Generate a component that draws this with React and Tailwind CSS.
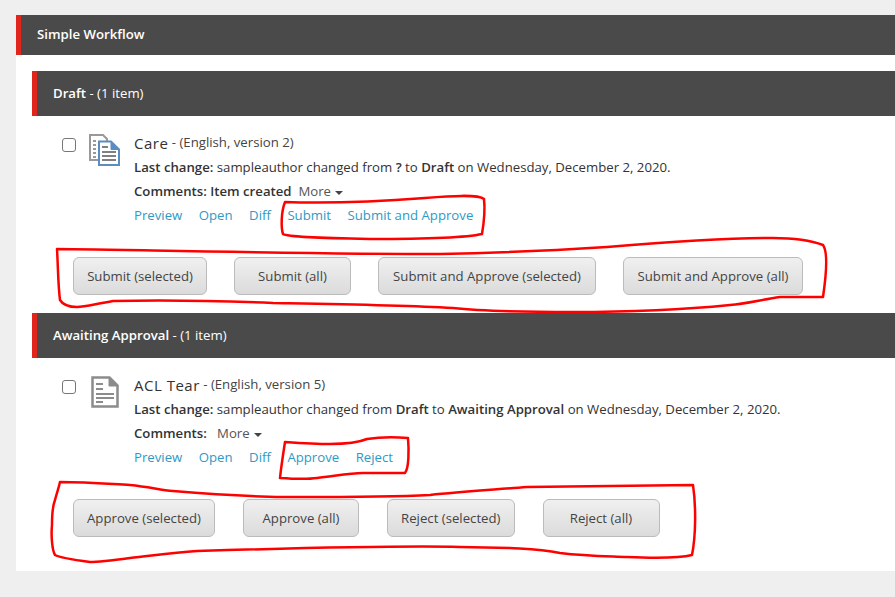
import React from 'react';

const DocsIcon = () => (
  <svg width="32" height="32" viewBox="0 0 32 32" fill="none">
    <path d="M1 1h13l4 4v21H1z" fill="#fff" stroke="#999" strokeWidth="2" />
    <path d="M4 7h3M4 11h3M4 15h3M4 19h3M4 23h3" stroke="#999" strokeWidth="2" />
    <path d="M10 7.500h12l8 8V31H10z" fill="#fff" stroke="#5b8dc1" strokeWidth="2" />
    <path d="M22 8v7.500h8" fill="#5b8dc1" stroke="#5b8dc1" strokeWidth="1" />
    <path d="M13 13h6M13 18h14M13 22h14M13 26h14" stroke="#808080" strokeWidth="2" />
  </svg>
);

const DocIcon = () => (
  <svg width="28" height="32" viewBox="0 0 28 32" fill="none">
    <path d="M1.500 1.500h17l8 8v21h-25z" fill="#fff" stroke="#8c8c8c" strokeWidth="2.500" />
    <path d="M18 2v8h8" fill="#8c8c8c" stroke="#8c8c8c" strokeWidth="1" />
    <path d="M5 8h7M5 13h7M5 18h18M5 22h18M5 26h7" stroke="#8c8c8c" strokeWidth="2" />
  </svg>
);

const ActionLinks = ({ links }) => (
  <div className="flex h-6 items-center gap-[16.500px]">
    {links.map((link) => (
      <a key={link} href="#!" className="text-[#2e9ac6]">
        {link}
      </a>
    ))}
  </div>
);

const Section = ({ label, icon, iconClass, title, version, change, comments, links, buttons, gapClass }) => (
  <div>
    <div className="flex h-[45px] items-center border-l-[5px] border-[#e0261c] bg-[#4a4a4a] pl-4 text-[13.200px] text-white">
      <span className="font-semibold">{label}</span>
      <span>&nbsp;- (1 item)</span>
    </div>
    <div className="flex pl-[30px] pt-[15px]">
      <input type="checkbox" className="mt-[7px] h-[14px] w-[14px] appearance-none rounded-[3px] border border-[#777] bg-white" />
      <div className={`ml-[13px] mt-[3px] w-[45px] shrink-0 ${iconClass}`}>{icon}</div>
      <div className="text-[13.200px] text-[#333]">
        <div className="flex h-[25px] items-center pb-px">
          <span className="text-[15px] tracking-[0.5px]">{title}</span>
          <span className="text-[#444]">&nbsp;- (English, version {version})</span>
        </div>
        <div className="flex h-6 items-center whitespace-pre">{change}</div>
        <div className="flex h-6 items-center whitespace-pre">
          {comments}
          <span className="text-[#555]">More</span>
          <span className="ml-1 mt-[2px] border-x-4 border-t-4 border-x-transparent border-t-[#444]" />
        </div>
        <ActionLinks links={links} />
      </div>
    </div>
    <div className={`ml-[41px] mt-[29px] flex ${gapClass}`}>
      {buttons.map((b) => (
        <button key={b.text} className={`h-[38px] whitespace-nowrap rounded-md border border-[#bbb] bg-linear-to-b from-[#f0f0f0] to-[#dbdbdb] pt-px text-[13.200px] text-[#444] ${b.w}`}>
          {b.text}
        </button>
      ))}
    </div>
  </div>
);

export default function App() {
  return (
    <div className="relative h-[597px] w-[895px] overflow-hidden bg-[#efefef] pl-4 pt-[15px] font-['Open_Sans',sans-serif]">
      <div className="h-[556px] bg-white">
        <div className="flex h-10 items-center border-l-[5px] border-[#e0261c] bg-[#4a4a4a] pl-4 text-[13.200px] font-semibold text-white">
          Simple Workflow
        </div>
        <div className="pl-4 pt-4">
          <Section
            label="Draft"
            icon={<DocsIcon />}
            iconClass=""
            title="Care"
            version="2"
            change={<>
              <span className="font-semibold">Last change:</span> sampleauthor changed from <span className="font-semibold">?</span> to <span className="font-semibold">Draft</span> on Wednesday, December 2, 2020.
            </>}
            comments={<span className="font-semibold">Comments: Item created  </span>}
            links={['Preview', 'Open', 'Diff', 'Submit', 'Submit and Approve']}
            buttons={[
              { text: 'Submit (selected)', w: 'w-[134px]' },
              { text: 'Submit (all)', w: 'w-[117px]' },
              { text: 'Submit and Approve (selected)', w: 'w-[218px]' },
              { text: 'Submit and Approve (all)', w: 'w-[180px]' },
            ]}
            gapClass="gap-[27px]"
          />
          <div className="h-[18px]" />
          <Section
            label="Awaiting Approval"
            icon={<DocIcon />}
            iconClass="pl-[2px]"
            title="ACL Tear"
            version="5"
            change={<>
              <span className="font-semibold">Last change:</span> sampleauthor changed from <span className="font-semibold">Draft</span> to <span className="font-semibold">Awaiting Approval</span> on Wednesday, December 2, 2020.
            </>}
            comments={<span className="font-semibold">Comments:   </span>}
            links={['Preview', 'Open', 'Diff', 'Approve', 'Reject']}
            buttons={[
              { text: 'Approve (selected)', w: 'w-[142px]' },
              { text: 'Approve (all)', w: 'w-[116px]' },
              { text: 'Reject (selected)', w: 'w-[127.500px]' },
              { text: 'Reject (all)', w: 'w-[117px]' },
            ]}
            gapClass="gap-[28px]"
          />
        </div>
      </div>

      {/* hand drawn red marks on top of the screenshot */}
      <svg className="pointer-events-none absolute left-0 top-0" width="895" height="597" fill="none" stroke="#f00" strokeWidth="2.500" strokeLinejoin="round" strokeLinecap="round">
        <path d="M285 202C281 212 281 228 283 234C287 237 320 238 370 239C420 239 465 238 482 234C484 222 485 208 484 199C478 194 450 196 425 198C385 201 340 204 285 202Z" />
        <path d="M57 249C100 249 300 254 440 254C500 253 560 250 607 247C680 241 740 238 773 238C790 238 810 240 823 245C828 252 827 270 823 297L780 297C760 300 745 304 730 305C680 310 620 312 573 312C530 312 480 311 453 308C400 305 330 304 273 303C200 300 150 300 113 301C95 304 85 307 77 307C68 307 63 305 60 300C58 285 58 265 57 249Z" />
        <path d="M285 442C283 455 281 468 280 478C295 479 310 479 317 478C335 476 350 473 363 473L405 473C409 468 409 450 408 438C395 437 380 437 367 439C355 444 340 444 330 444C315 444 300 443 285 442Z" />
        <path d="M60 482C90 482 110 484 130 485C150 487 160 490 173 491C220 495 260 497 297 497C340 497 390 497 430 495C460 492 490 490 527 487C590 486 650 485 693 485C696 505 696 535 692 555C680 558 650 558 627 557C600 556 585 556 560 553C540 549 525 549 510 548L460 547C420 546 300 548 197 551C170 553 150 556 130 558C115 560 100 562 90 562C75 560 60 558 55 555C52 550 51 535 52 525C52 510 53 505 55 500C57 492 59 487 60 482Z" />
      </svg>
    </div>
  );
}
